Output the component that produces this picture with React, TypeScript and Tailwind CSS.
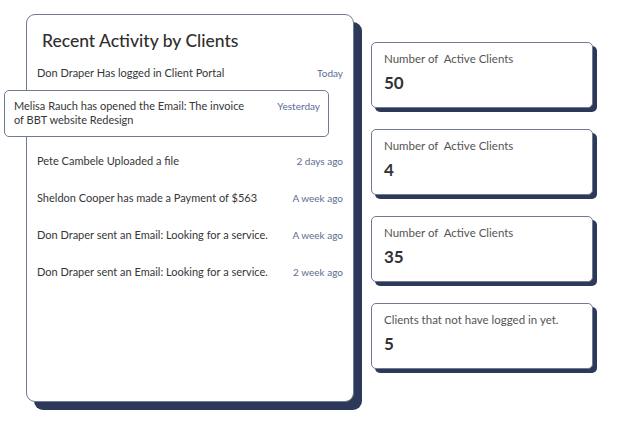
const activity = [
  { text: "Pete Cambele Uploaded a file", when: "2 days ago" },
  { text: "Sheldon Cooper has made a Payment of $563", when: "A week ago" },
  { text: "Don Draper sent an Email: Looking for a service.", when: "A week ago" },
  { text: "Don Draper sent an Email: Looking for a service.", when: "2 week ago" },
];

const stats = [
  { label: "Number of  Active Clients", value: "50" },
  { label: "Number of  Active Clients", value: "4" },
  { label: "Number of  Active Clients", value: "35" },
  { label: "Clients that not have logged in yet.", value: "5" },
];

export default function App() {
  return (
    <div className="flex min-h-[425px] gap-[17px] bg-white pl-[26px] pt-[14px] font-['Lato',sans-serif]">
      <section className="h-[388px] w-[328px] rounded-[9px] border border-[#717a94] bg-white shadow-[8px_8px_0_#2d3958]">
        <h2 className="pl-[15px] pt-[14px] text-[17.5px] leading-[24px] font-medium text-[#2f2f2f]">
          Recent Activity by Clients
        </h2>

        <div className="mt-[12px] flex h-[20px] items-baseline justify-between pl-[10px] pr-[10px] text-[11px] text-[#363636]">
          <span>Don Draper Has logged in Client Portal</span>
          <span className="text-[10px] text-[#5c6b94]">Today</span>
        </div>

        <div className="relative -ml-[23px] mt-[5px] flex w-[325px] items-start justify-between rounded-[5px] border border-[#717a94] bg-white pb-[9px] pl-[9px] pr-[8px] pt-[8px] text-[11px] leading-[14px] text-[#363636]">
          <span className="w-[240px]">
            Melisa Rauch has opened the Email: The invoice of BBT website Redesign
          </span>
          <span className="text-[10px] text-[#5c6b94]">Yesterday</span>
        </div>

        <div className="mt-[16px] flex flex-col gap-[17px]">
          {activity.map((item, i) => (
            <div
              key={i}
              className="flex h-[20px] items-baseline justify-between pl-[10px] pr-[10px] text-[11px] text-[#363636]"
            >
              <span>{item.text}</span>
              <span className="text-[10px] text-[#5c6b94]">{item.when}</span>
            </div>
          ))}
        </div>
      </section>

      <div className="mt-[28px] flex flex-col gap-[21px]">
        {stats.map((s, i) => (
          <div
            key={i}
            className="h-[66px] w-[222px] rounded-[5px] border border-[#717a94] bg-white pl-[12px] pt-[7px] shadow-[4px_4px_0_#2d3958]"
          >
            <p className="whitespace-pre text-[11.5px] leading-[18px] text-[#555]">{s.label}</p>
            <p className="mt-[4px] text-[17px] leading-[22px] font-bold text-[#333]">{s.value}</p>
          </div>
        ))}
      </div>
    </div>
  );
}
